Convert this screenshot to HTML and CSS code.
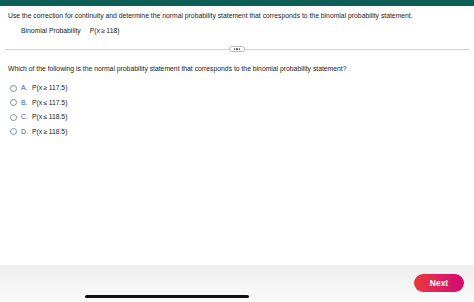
FILE: index.html
```html
<!DOCTYPE html>
<html>
<head>
<meta charset="utf-8">
<link rel="stylesheet" href="styles.css">
</head>
<body>
<div class="page">
  <div class="topbar"></div>
  <main class="content">
    <p class="intro">Use the correction for continuity and determine the normal probability statement that corresponds to the binomial probability statement.</p>
    <p class="given"><span class="label">Binomial Probability</span><span>P(x&thinsp;≥&thinsp;118)</span></p>
    <div class="divider"><span class="line"></span><span class="pill"><i></i><i></i><i></i></span><span class="line"></span></div>
    <p class="question">Which of the following is the normal probability statement that corresponds to the binomial probability statement?</p>
    <ul class="options">
      <li class="option"><span class="radio"></span><span class="letter">A.</span><span>P(x&thinsp;≥&thinsp;117.5)</span></li>
      <li class="option"><span class="radio"></span><span class="letter">B.</span><span>P(x&thinsp;≤&thinsp;117.5)</span></li>
      <li class="option"><span class="radio"></span><span class="letter">C.</span><span>P(x&thinsp;≤&thinsp;118.5)</span></li>
      <li class="option"><span class="radio"></span><span class="letter">D.</span><span>P(x&thinsp;≥&thinsp;118.5)</span></li>
    </ul>
  </main>
  <footer class="footer">
    <span class="home"></span>
    <button class="next">Next</button>
  </footer>
</div>
</body>
</html>
```
FILE: styles.css
```css
* { box-sizing: border-box; }
html, body { margin: 0; padding: 0; }
body {
  width: 474px;
  height: 302px;
  overflow: hidden;
  background: #fff;
  font-family: "Liberation Sans", Arial, sans-serif;
  color: #222;
}
.page {
  display: flex;
  flex-direction: column;
  height: 302px;
}
.topbar {
  height: 6px;
  background: #0d5e57;
  flex: none;
}
.content {
  flex: 1;
  padding: 0 5px 0 5px;
}
.intro {
  margin: 5px 0 0 3px;
  font-size: 6.8px;
  line-height: 10px;
}
.given {
  margin: 5px 0 0 16px;
  font-size: 6.8px;
  line-height: 10px;
  display: flex;
  gap: 9px;
}
.divider {
  margin-top: 10px;
  display: flex;
  align-items: center;
  height: 6px;
}
.line {
  flex: 1;
  height: 1px;
  background: #cfcfcf;
}
.pill {
  width: 16px;
  height: 6px;
  border: 1px solid #b9bcc4;
  border-radius: 3px;
  display: flex;
  align-items: center;
  justify-content: center;
  gap: 1.5px;
  background: #fff;
}
.pill i {
  width: 1.2px;
  height: 1.2px;
  border-radius: 50%;
  background: #556;
}
.question {
  margin: 12px 0 0 3px;
  font-size: 6.8px;
  line-height: 10px;
}
.options {
  list-style: none;
  margin: 9px 0 0 5px;
  padding: 0;
  display: flex;
  flex-direction: column;
  gap: 4.5px;
}
.option {
  display: flex;
  align-items: center;
  font-size: 6.8px;
  line-height: 10px;
  height: 10px;
}
.radio {
  width: 7px;
  height: 7px;
  border: 1px solid #7d8fb0;
  border-radius: 50%;
  margin-right: 4px;
}
.letter {
  color: #3b5aa6;
  width: 11px;
}
.footer {
  flex: none;
  height: 37px;
  background: linear-gradient(to bottom, #efefef, #fafafa);
  position: relative;
  display: flex;
  justify-content: flex-end;
  align-items: flex-start;
  padding: 9px 10px 0 0;
}
.home {
  position: absolute;
  left: 85px;
  top: 30px;
  width: 164px;
  height: 3px;
  border-radius: 2px;
  background: #111;
}
.next {
  width: 50px;
  height: 18px;
  border: none;
  border-radius: 9px;
  background: linear-gradient(to right, #e93a3e, #d20a73);
  color: #fff;
  font-family: "Liberation Sans", Arial, sans-serif;
  font-weight: bold;
  font-size: 8.5px;
  padding: 0;
}
```
